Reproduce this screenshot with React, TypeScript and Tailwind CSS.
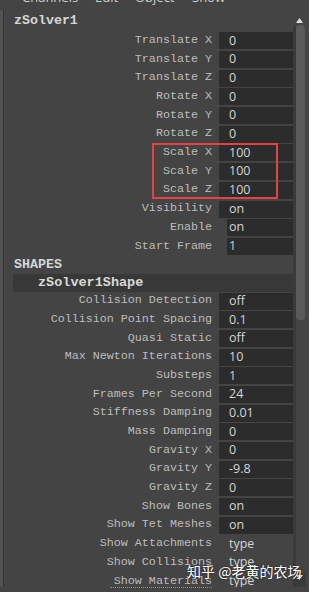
import React from 'react';

type Row = {
  label: string;
  value: string;
  inset?: boolean; // field starts a little further right
  bare?: boolean; // no dark field behind the value
};

const solverRows: Row[] = [
  { label: 'Translate X', value: '0' },
  { label: 'Translate Y', value: '0' },
  { label: 'Translate Z', value: '0' },
  { label: 'Rotate X', value: '0' },
  { label: 'Rotate Y', value: '0' },
  { label: 'Rotate Z', value: '0' },
  { label: 'Scale X', value: '100' },
  { label: 'Scale Y', value: '100' },
  { label: 'Scale Z', value: '100' },
  { label: 'Visibility', value: 'on' },
  { label: 'Enable', value: 'on', inset: true },
  { label: 'Start Frame', value: '1', inset: true },
];

const shapeRows: Row[] = [
  { label: 'Collision Detection', value: 'off' },
  { label: 'Collision Point Spacing', value: '0.1' },
  { label: 'Quasi Static', value: 'off' },
  { label: 'Max Newton Iterations', value: '10' },
  { label: 'Substeps', value: '1' },
  { label: 'Frames Per Second', value: '24' },
  { label: 'Stiffness Damping', value: '0.01' },
  { label: 'Mass Damping', value: '0' },
  { label: 'Gravity X', value: '0' },
  { label: 'Gravity Y', value: '-9.8' },
  { label: 'Gravity Z', value: '0' },
  { label: 'Show Bones', value: 'on' },
  { label: 'Show Tet Meshes', value: 'on' },
  { label: 'Show Attachments', value: 'type', bare: true },
  { label: 'Show Collisions', value: 'type', bare: true },
  { label: 'Show Materials', value: 'type', bare: true },
];

const mono = "font-['Liberation_Mono','DejaVu_Sans_Mono',monospace]";
const sans = "font-['Open_Sans','Liberation_Sans',sans-serif]";

function ChannelRow({ row }: { row: Row }) {
  return (
    <div className="flex h-[18.7px] shrink-0 items-center">
      <div className={`w-[208px] shrink-0 text-right text-[11.7px] leading-none text-[#bdbdbd] ${mono}`}>
        {row.label}
      </div>
      <div
        className={`flex h-[17px] flex-1 items-center ${row.inset ? 'ml-[15px] pl-[2px]' : 'ml-[7px] pl-[10px]'} ${
          row.bare ? '' : 'bg-[#2c2c2c]'
        }`}
      >
        <span className={`text-[12.5px] leading-none text-[#d4d4d4] ${sans}`}>{row.value}</span>
      </div>
    </div>
  );
}

export default function App() {
  return (
    <div className="relative flex h-[592px] w-[309px] flex-col overflow-hidden bg-[#444444]">
      {/* Menu bar, mostly scrolled off the top */}
      <div className={`flex h-[10px] shrink-0 overflow-hidden text-[13px] leading-[13px] text-[#cfcfcf] ${sans}`}>
        <span className="-mt-[9px] ml-[22px] w-[73px]">Channels</span>
        <span className="-mt-[9px] w-[40px]">Edit</span>
        <span className="-mt-[9px] w-[57px]">Object</span>
        <span className="-mt-[9px]">Show</span>
      </div>

      {/* Channel box */}
      <div className="flex h-[577px] shrink-0">
        <div className="w-[3px] shrink-0 bg-[#515151]" />
        <div className="w-[1px] shrink-0 bg-[#353535]" />

        <div className="flex w-[289px] shrink-0 flex-col overflow-hidden">
          <div className={`flex h-[21.5px] shrink-0 items-center pl-[10px] text-[13.3px] font-bold leading-none text-[#d6d6d6] ${mono}`}>
            zSolver1
          </div>
          {solverRows.map((r) => (
            <ChannelRow key={r.label} row={r} />
          ))}

          <div className={`flex h-[17px] shrink-0 items-center pl-[10px] text-[13.3px] font-bold leading-none text-[#d6d6d6] ${mono}`}>
            SHAPES
          </div>
          <div
            className={`mt-[1px] ml-[9px] flex h-[18px] shrink-0 items-center bg-[#383838] pl-[25px] text-[13.5px] font-bold leading-none text-[#d8d8d8] ${mono}`}
          >
            zSolver1Shape
          </div>
          {shapeRows.map((r) => (
            <ChannelRow key={r.label} row={r} />
          ))}
        </div>

        {/* Scroll bar */}
        <div className="flex w-[13px] shrink-0 flex-col">
          <div className="flex h-[15px] shrink-0 items-end justify-end pr-[3px] pb-[2px]">
            <svg width="7" height="5" viewBox="0 0 7 5">
              <path d="M3.5 0 L7 5 L0 5 Z" fill="#dcdcdc" />
            </svg>
          </div>
          <div className="flex flex-1 bg-[#3a3a3a] pl-[3px]">
            <div className="flex w-[10px] flex-col bg-[#444444]">
              <div className="h-[295px] w-[9px] rounded-t-[4px] rounded-b-[3px] bg-[#5b5b5b]" />
            </div>
          </div>
          <div className="flex h-[14px] shrink-0 justify-end bg-[#3a3a3a] pt-[2px] pr-[3px]">
            <svg width="7" height="5" viewBox="0 0 7 5">
              <path d="M0 0 L7 0 L3.5 5 Z" fill="#dcdcdc" />
            </svg>
          </div>
        </div>
        <div className="w-[3px] shrink-0 bg-[#454545]" />
      </div>

      {/* Splitter */}
      <div className="flex h-[5px] shrink-0 items-start pl-[110px]">
        <div className="w-[102px] border-t border-dotted border-[#8a8a8a]" />
      </div>

      {/* Highlight around the scale channels */}
      <div className="pointer-events-none absolute left-[152px] top-[143px] h-[56px] w-[126px] border-2 border-[#e04444]" />

      {/* Watermark */}
      <div
        className="pointer-events-none absolute left-[187px] top-[562px] whitespace-nowrap text-[14px] leading-[18px] text-white [text-shadow:0_0_2px_rgba(0,0,0,0.6)] font-['Noto_Sans_CJK_SC','Noto_Sans',sans-serif]"
      >
        知乎 @老黄的农场
      </div>
    </div>
  );
}
